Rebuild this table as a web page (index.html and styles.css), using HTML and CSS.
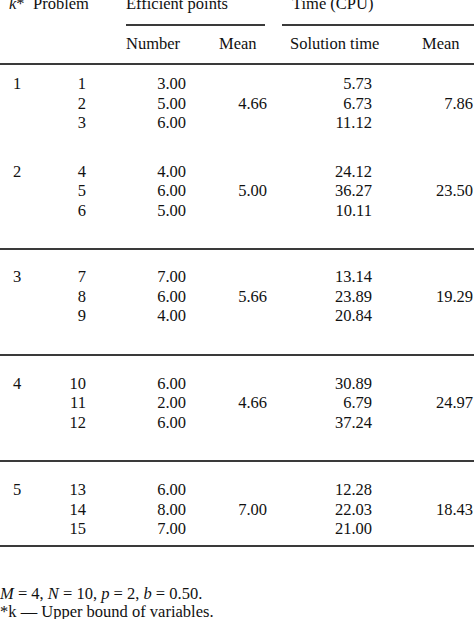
FILE: index.html
```html
<!DOCTYPE html>
<html>
<head>
<meta charset="utf-8">
<link rel="stylesheet" href="styles.css">
</head>
<body>
<div class="page">
  <div class="head1">
    <div class="h-k"><i>k</i>*</div>
    <div class="h-prob">Problem</div>
    <div class="h-grp h-eff">Efficient points</div>
    <div class="h-grp h-time">Time (CPU)</div>
  </div>
  <div class="head2">
    <div></div>
    <div></div>
    <div class="h-num">Number</div>
    <div class="h-mean1">Mean</div>
    <div class="h-sol">Solution time</div>
    <div class="h-mean2">Mean</div>
  </div>

  <div class="group g1">
    <div class="c1">1</div><div class="c2">1</div><div class="c3">3.00</div><div class="c4"></div><div class="c5">5.73</div><div class="c6"></div>
    <div class="c1"></div><div class="c2">2</div><div class="c3">5.00</div><div class="c4">4.66</div><div class="c5">6.73</div><div class="c6">7.86</div>
    <div class="c1"></div><div class="c2">3</div><div class="c3">6.00</div><div class="c4"></div><div class="c5">11.12</div><div class="c6"></div>
  </div>

  <div class="group g2 ruled">
    <div class="c1">2</div><div class="c2">4</div><div class="c3">4.00</div><div class="c4"></div><div class="c5">24.12</div><div class="c6"></div>
    <div class="c1"></div><div class="c2">5</div><div class="c3">6.00</div><div class="c4">5.00</div><div class="c5">36.27</div><div class="c6">23.50</div>
    <div class="c1"></div><div class="c2">6</div><div class="c3">5.00</div><div class="c4"></div><div class="c5">10.11</div><div class="c6"></div>
  </div>

  <div class="group g3 ruled">
    <div class="c1">3</div><div class="c2">7</div><div class="c3">7.00</div><div class="c4"></div><div class="c5">13.14</div><div class="c6"></div>
    <div class="c1"></div><div class="c2">8</div><div class="c3">6.00</div><div class="c4">5.66</div><div class="c5">23.89</div><div class="c6">19.29</div>
    <div class="c1"></div><div class="c2">9</div><div class="c3">4.00</div><div class="c4"></div><div class="c5">20.84</div><div class="c6"></div>
  </div>

  <div class="group g4 ruled">
    <div class="c1">4</div><div class="c2">10</div><div class="c3">6.00</div><div class="c4"></div><div class="c5">30.89</div><div class="c6"></div>
    <div class="c1"></div><div class="c2">11</div><div class="c3">2.00</div><div class="c4">4.66</div><div class="c5">6.79</div><div class="c6">24.97</div>
    <div class="c1"></div><div class="c2">12</div><div class="c3">6.00</div><div class="c4"></div><div class="c5">37.24</div><div class="c6"></div>
  </div>

  <div class="group g5 ruled">
    <div class="c1">5</div><div class="c2">13</div><div class="c3">6.00</div><div class="c4"></div><div class="c5">12.28</div><div class="c6"></div>
    <div class="c1"></div><div class="c2">14</div><div class="c3">8.00</div><div class="c4">7.00</div><div class="c5">22.03</div><div class="c6">18.43</div>
    <div class="c1"></div><div class="c2">15</div><div class="c3">7.00</div><div class="c4"></div><div class="c5">21.00</div><div class="c6"></div>
  </div>

  <div class="notes">
    <div><i>M</i> = 4, <i>N</i> = 10, <i>p</i> = 2, <i>b</i> = 0.50.</div>
    <div>*k — Upper bound of variables.</div>
  </div>
</div>
</body>
</html>
```

FILE: styles.css
```css
html, body {
  margin: 0;
  padding: 0;
  background: #ffffff;
}

body {
  font-family: "Liberation Serif", "Times New Roman", serif;
  font-size: 16.5px;
  color: #111111;
  overflow: hidden;
}

.page {
  width: 474px;
  margin-top: -6px;
}

.head1,
.head2,
.group {
  display: grid;
  grid-template-columns: 30px 70px 100px 75px 115px 84px;
  line-height: 20px;
}

.head1 {
  align-items: start;
}

.h-k {
  padding-left: 9px;
}

.h-prob {
  padding-left: 3px;
}

.h-grp {
  padding-bottom: 10px;
  border-bottom: 2px solid #3a3a3a;
}

.h-eff {
  grid-column: 3 / span 2;
  margin-left: 26px;
  margin-right: 10px;
}

.h-time {
  grid-column: 5 / span 2;
  margin-left: 7px;
  padding-left: 10px;
}

.head2 {
  padding-top: 8px;
  padding-bottom: 9px;
  border-bottom: 2px solid #3a3a3a;
}

.h-num {
  padding-left: 26px;
}

.h-mean1 {
  padding-left: 19px;
}

.h-sol {
  padding-left: 15px;
}

.h-mean2 {
  padding-left: 32px;
}

.group {
  line-height: 19.5px;
}

.ruled {
  border-bottom: 2px solid #3a3a3a;
}

.g1 {
  padding-top: 9px;
  padding-bottom: 29px;
}

.g2 {
  padding-bottom: 28px;
}

.g3 {
  padding-top: 17px;
  padding-bottom: 28px;
}

.g4 {
  padding-top: 18px;
  padding-bottom: 28px;
}

.g5 {
  padding-top: 18px;
  padding-bottom: 6px;
}

.c1 {
  padding-left: 13px;
}

.c2,
.c3,
.c4,
.c5,
.c6 {
  text-align: right;
}

.c2 {
  padding-right: 14px;
}

.c3 {
  padding-right: 14px;
}

.c4 {
  padding-right: 8px;
}

.c5 {
  padding-right: 18px;
}

.c6 {
  padding-right: 1px;
}

.notes {
  margin-top: 38px;
  line-height: 18.5px;
}
```
